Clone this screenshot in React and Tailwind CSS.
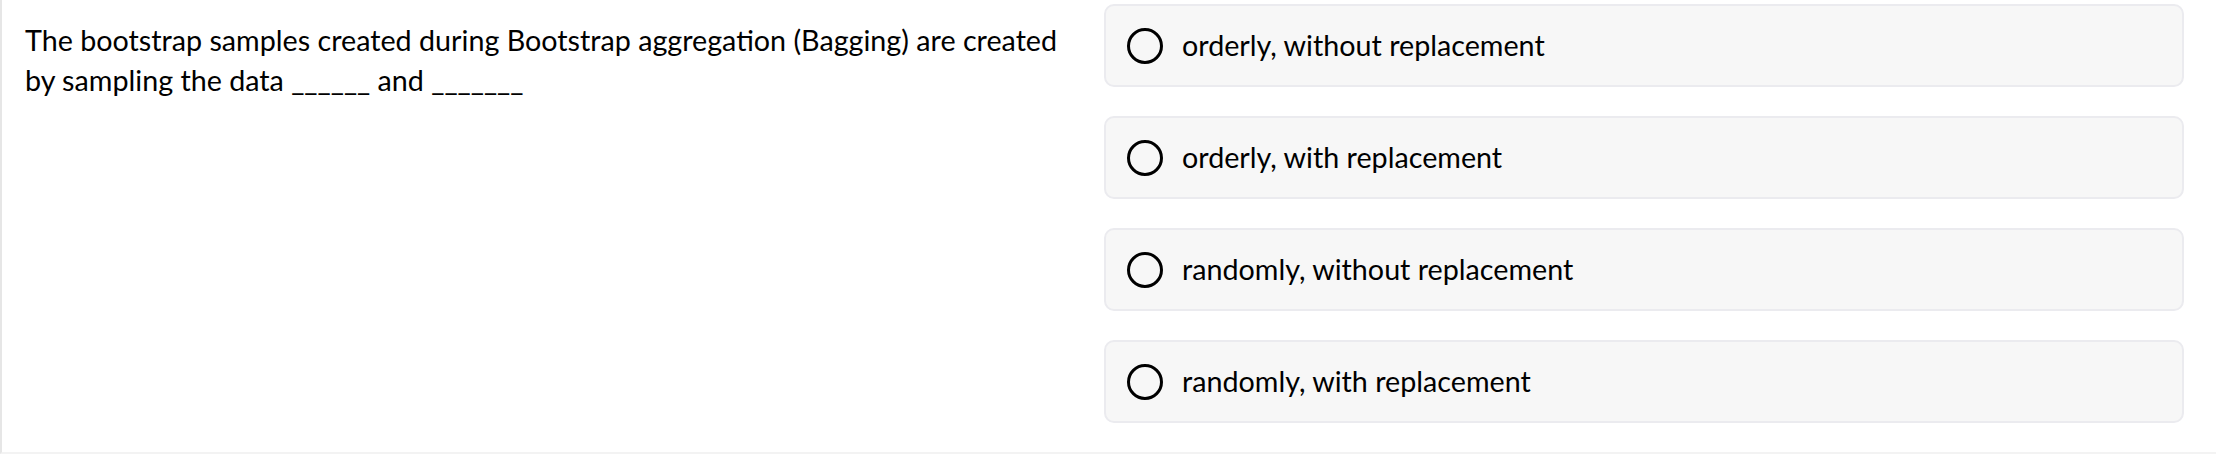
import React from "react";

const options = [
  "orderly, without replacement",
  "orderly, with replacement",
  "randomly, without replacement",
  "randomly, with replacement",
];

export default function App() {
  return (
    <div
      className="flex h-[454px] w-[2216px] border-l-2 border-b-2 border-l-[#e6e6e6] border-b-[#f3f3f3] bg-white text-black"
      style={{ fontFamily: "Lato, 'Noto Sans', sans-serif" }}
    >
      <div className="w-[1102px] shrink-0 pl-[23px] pr-[20px] pt-[20px] text-[28.7px] leading-[40px]">
        The bootstrap samples created during Bootstrap aggregation (Bagging) are created by sampling the data ______ and _______
      </div>
      <div className="flex w-[1080px] flex-col gap-[29px] pt-[4px]">
        {options.map((o) => (
          <div
            key={o}
            className="flex h-[83px] items-center gap-[19px] rounded-[10px] border-2 border-[#ebebef] bg-[#f7f7f7] pl-[21px]"
          >
            <span className="h-[36px] w-[36px] shrink-0 rounded-full border-[3.5px] border-black" />
            <span className="text-[28.7px]">{o}</span>
          </div>
        ))}
      </div>
    </div>
  );
}
